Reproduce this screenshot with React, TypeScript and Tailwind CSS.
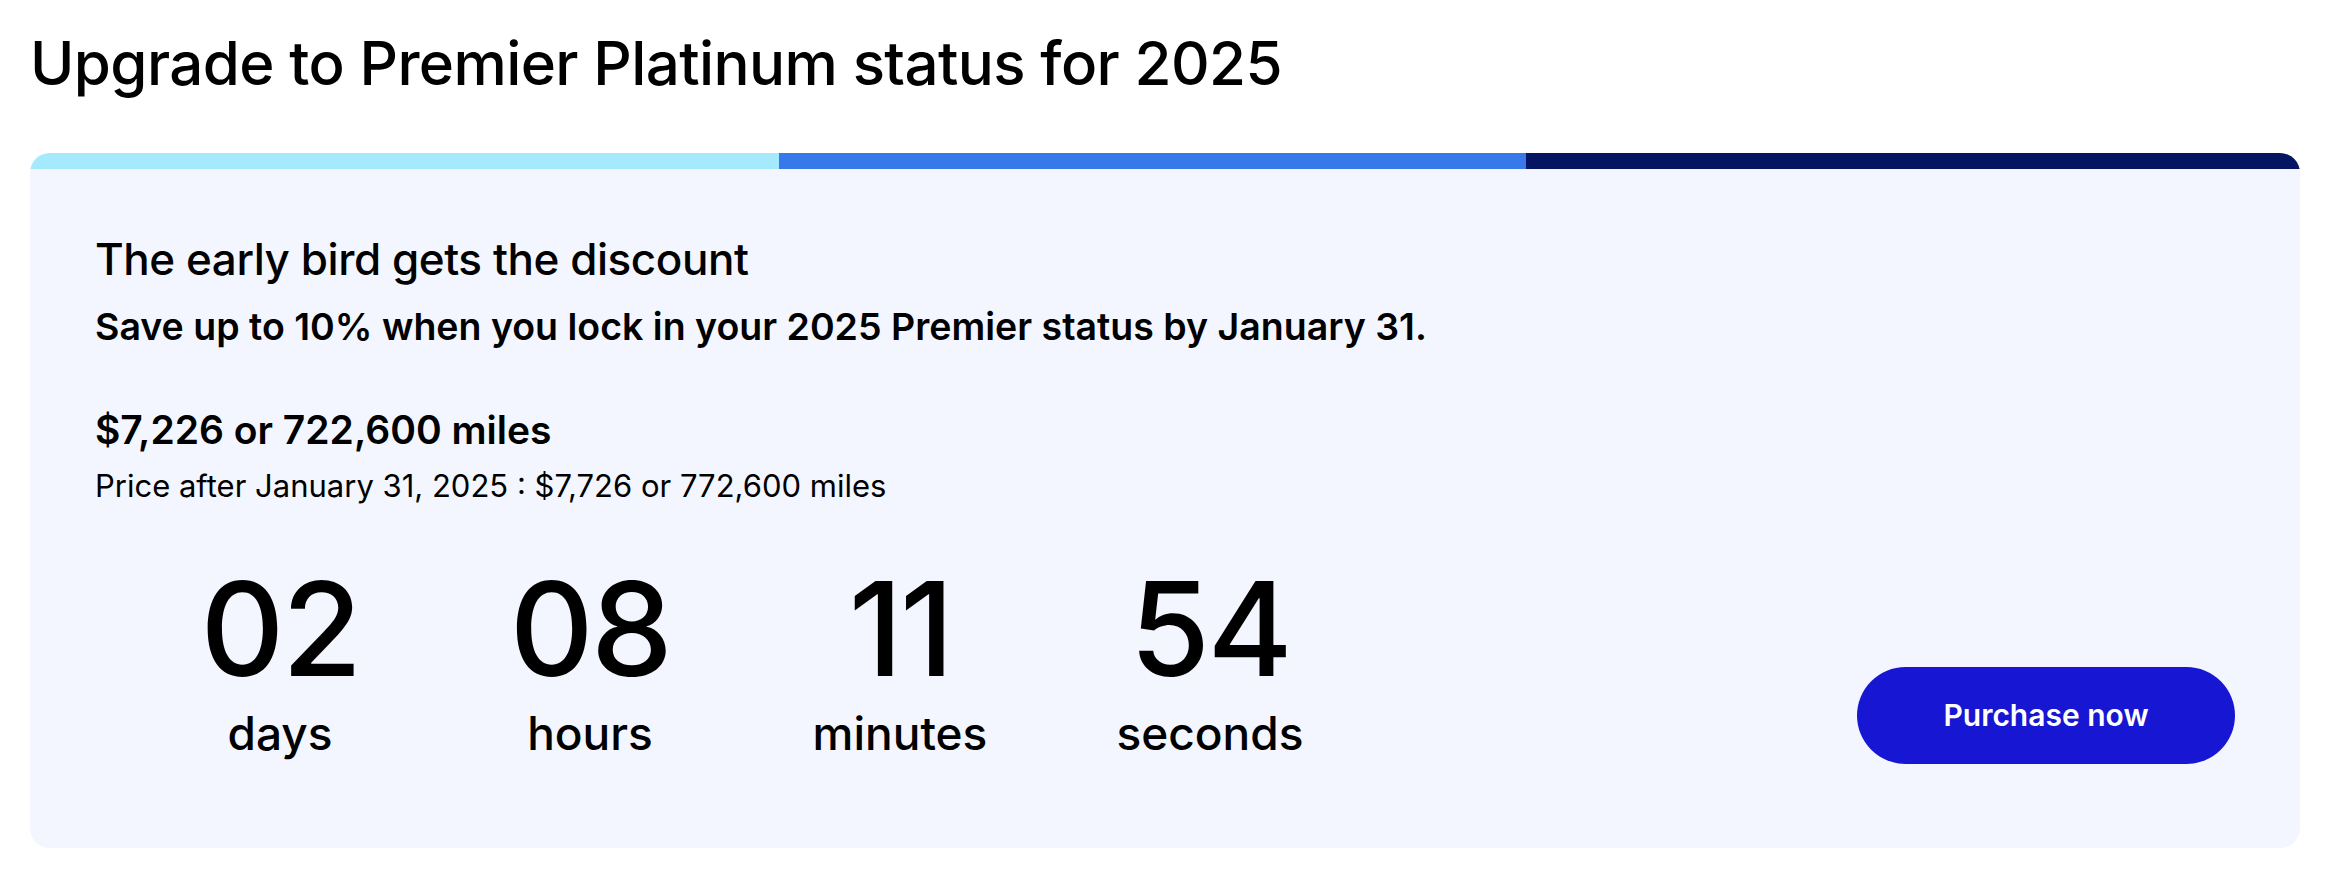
export default function App() {
  const units = [
    { value: "02", label: "days" },
    { value: "08", label: "hours" },
    { value: "11", label: "minutes" },
    { value: "54", label: "seconds" },
  ];

  return (
    <div className="min-h-screen bg-white font-['Inter',sans-serif] text-black px-[30px] pt-[27px]">
      <h1 className="text-[60px] leading-[72px] font-medium tracking-[-0.01em]">
        Upgrade to Premier Platinum status for 2025
      </h1>

      {/* Offer card */}
      <div className="mt-[54px] w-[2270px] rounded-[20px] overflow-hidden bg-[#f3f6fe]">
        {/* Tier bar */}
        <div className="flex h-[16px]">
          <div className="w-[749px] bg-[#a5e9fd]" />
          <div className="w-[747px] bg-[#3779ea]" />
          <div className="flex-1 bg-[#061562]" />
        </div>

        <div className="px-[65px] pt-[63px] pb-[84px]">
          <h2 className="text-[44px] leading-[54px] font-medium tracking-[-0.01em]">
            The early bird gets the discount
          </h2>
          <p className="mt-[18px] text-[37.5px] leading-[46px] font-semibold">
            Save up to 10% when you lock in your 2025 Premier status by January 31.
          </p>

          <p className="mt-[56px] text-[39px] leading-[48px] font-semibold">
            $7,226 or 722,600 miles
          </p>
          <p className="mt-[14px] text-[31px] leading-[36px]">
            Price after January 31, 2025 : $7,726 or 772,600 miles
          </p>

          <div className="mt-[60px] flex items-end justify-between">
            {/* Countdown */}
            <div className="ml-[30px] grid grid-cols-4 w-[1240px] pb-[4px]">
              {units.map((u) => (
                <div key={u.label} className="flex flex-col items-center">
                  <span className="text-[130px] leading-[130px] font-medium tracking-[-0.02em]">
                    {u.value}
                  </span>
                  <span className="mt-[12px] text-[46px] leading-[54px] font-medium">
                    {u.label}
                  </span>
                </div>
              ))}
            </div>

            <button className="w-[378px] h-[97px] rounded-full bg-[#1716d3] text-white text-[30px] font-semibold">
              Purchase now
            </button>
          </div>
        </div>
      </div>
    </div>
  );
}
